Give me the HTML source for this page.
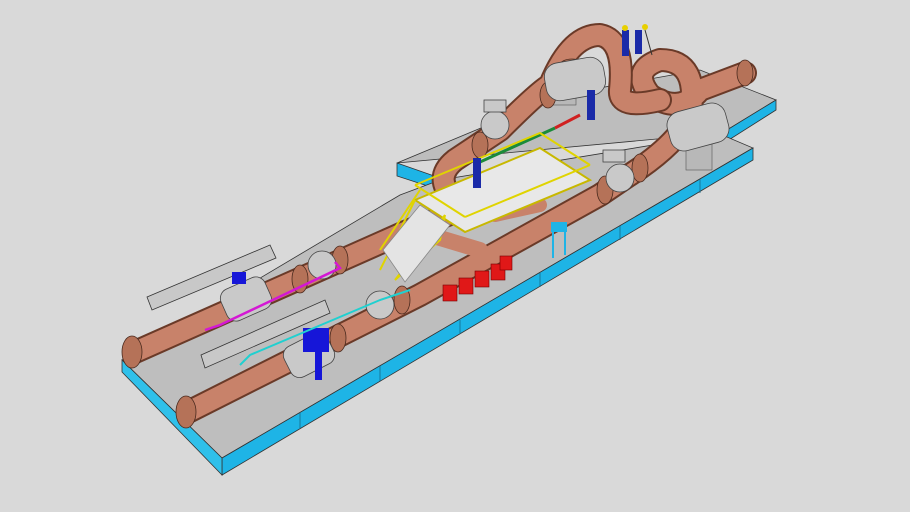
<!DOCTYPE html>
<html><head><meta charset="utf-8"><style>
html,body{margin:0;padding:0;background:#d9d9d9;width:910px;height:512px;overflow:hidden}
</style></head><body>
<svg width="910" height="512" viewBox="0 0 910 512" xmlns="http://www.w3.org/2000/svg">
<rect width="910" height="512" fill="#d9d9d9"/>
<!-- upper deck -->
<polygon points="397,163 560,95 700,70 776,100 722,133" fill="#bdbdbd" stroke="#333" stroke-width="0.8"/>
<polygon points="722,133 776,100 776,110 724,143" fill="#1eb4e6" stroke="#333" stroke-width="0.8"/>
<polygon points="397,163 440,178 440,190 397,176" fill="#1eb4e6" stroke="#333" stroke-width="0.8"/>
<!-- lower deck -->
<polygon points="122,360 400,195 440,180 720,134 753,148 222,458" fill="#bebebe" stroke="#333" stroke-width="0.8"/>
<polygon points="222,458 753,148 753,160 222,475" fill="#1eb4e6" stroke="#333" stroke-width="0.8"/>
<polygon points="122,360 222,458 222,475 122,372" fill="#2fc0ea" stroke="#333" stroke-width="0.8"/>
<g stroke="#146a8a" stroke-width="0.8">
<line x1="300" y1="413" x2="300" y2="428"/><line x1="380" y1="366" x2="380" y2="381"/><line x1="460" y1="320" x2="460" y2="334"/><line x1="540" y1="273" x2="540" y2="287"/><line x1="620" y1="226" x2="620" y2="240"/><line x1="700" y1="179" x2="700" y2="193"/>
</g>
<!-- gray beams -->
<polygon points="147,297 270,245 276,258 152,310" fill="#c8c8c8" stroke="#333" stroke-width="0.8"/>
<polygon points="201,355 325,300 330,313 205,368" fill="#c8c8c8" stroke="#333" stroke-width="0.8"/>
<!-- columns -->
<rect x="686" y="140" width="26" height="30" fill="#b8b8b8" stroke="#555" stroke-width="0.6"/>
<rect x="550" y="85" width="26" height="20" fill="#b8b8b8" stroke="#555" stroke-width="0.6"/>
<!-- pipes -->
<g fill="none" stroke-linecap="round" stroke-linejoin="round">
<path d="M135,352 L405,232 L460,210" stroke="#6a3a28" stroke-width="24"/>
<path d="M135,352 L405,232 L460,210" stroke="#c8826a" stroke-width="20"/>
<path d="M188,412 L420,295 L600,195 L640,168 Q680,140 690,115 Q700,60 660,60 Q630,70 650,95 Q680,115 700,90 L745,73" stroke="#6a3a28" stroke-width="24"/>
<path d="M188,412 L420,295 L600,195 L640,168 Q680,140 690,115 Q700,60 660,60 Q630,70 650,95 Q680,115 700,90 L745,73" stroke="#c8826a" stroke-width="20"/>
<path d="M460,205 Q430,180 455,160 L500,130 Q540,90 550,85 Q570,35 600,35 Q625,40 620,90 Q618,110 660,100" stroke="#6a3a28" stroke-width="24"/>
<path d="M460,205 Q430,180 455,160 L500,130 Q540,90 550,85 Q570,35 600,35 Q625,40 620,90 Q618,110 660,100" stroke="#c8826a" stroke-width="20"/>
<path d="M430,235 L480,250" stroke="#c8826a" stroke-width="16"/>
<path d="M495,215 L540,205" stroke="#c8826a" stroke-width="14"/>
</g>
<!-- flanges -->
<g fill="#b57258" stroke="#4a2a1e" stroke-width="0.8">
<ellipse cx="132" cy="352" rx="10" ry="16"/><ellipse cx="186" cy="412" rx="10" ry="16"/>
<ellipse cx="300" cy="279" rx="8" ry="14"/><ellipse cx="340" cy="260" rx="8" ry="14"/>
<ellipse cx="338" cy="338" rx="8" ry="14"/><ellipse cx="402" cy="300" rx="8" ry="14"/>
<ellipse cx="605" cy="190" rx="8" ry="14"/><ellipse cx="640" cy="168" rx="8" ry="14"/>
<ellipse cx="745" cy="73" rx="8" ry="13"/><ellipse cx="480" cy="145" rx="8" ry="13"/>
<ellipse cx="548" cy="95" rx="8" ry="13"/><ellipse cx="572" cy="65" rx="12" ry="6"/>
</g>
<!-- gray valves / vessels -->
<g fill="#c9c9c9" stroke="#444" stroke-width="0.8">
<rect x="222" y="282" width="48" height="34" rx="10" transform="rotate(-24 246 299)"/>
<rect x="285" y="338" width="48" height="34" rx="10" transform="rotate(-27 309 355)"/>
<circle cx="322" cy="265" r="14"/><circle cx="380" cy="305" r="14"/>
<circle cx="495" cy="125" r="14"/><circle cx="620" cy="178" r="14"/>
<rect x="545" y="60" width="60" height="38" rx="14" transform="rotate(-10 575 79)"/>
<rect x="668" y="107" width="60" height="40" rx="14" transform="rotate(-15 698 127)"/>
<rect x="484" y="100" width="22" height="12"/><rect x="603" y="150" width="22" height="12"/>
</g>
<!-- blue actuators -->
<rect x="303" y="328" width="26" height="24" fill="#1616d8"/><rect x="315" y="350" width="7" height="30" fill="#1616d8"/>
<rect x="232" y="272" width="14" height="12" fill="#1616d8"/>
<!-- small lines -->
<path d="M205,330 L220,325 L340,268 L335,262" stroke="#d418d4" stroke-width="2.5" fill="none"/>
<path d="M240,365 L250,355 L380,300 L410,290" stroke="#20d0d0" stroke-width="2" fill="none"/>
<path d="M480,162 L555,128" stroke="#1a8a3a" stroke-width="3"/>
<path d="M555,128 L580,115" stroke="#d02020" stroke-width="3"/>
<!-- yellow platform -->
<g stroke="#e0d400" stroke-width="2" fill="none">
<polygon points="415,200 540,148 590,180 465,232" fill="#e8e8e8" stroke="#c8b800"/>
<path d="M415,185 L540,133 L590,165 M465,217 L590,165 M415,185 L465,217"/>
<path d="M380,270 L415,200 M395,280 L445,215 M380,250 L420,190"/>
<path d="M395,280 L440,240 L445,215"/>
</g>
<polygon points="383,250 420,205 450,225 405,282" fill="#e4e4e4" stroke="#888" stroke-width="0.8"/>
<!-- red boxes -->
<g fill="#e01818" stroke="#700" stroke-width="0.6">
<rect x="443" y="285" width="14" height="16"/><rect x="459" y="278" width="14" height="16"/><rect x="475" y="271" width="14" height="16"/><rect x="491" y="264" width="14" height="16"/><rect x="500" y="256" width="12" height="14"/>
</g>
<rect x="551" y="222" width="16" height="10" fill="#1eb4e6"/>
<line x1="553" y1="232" x2="553" y2="258" stroke="#1eb4e6" stroke-width="2"/><line x1="565" y1="232" x2="565" y2="255" stroke="#1eb4e6" stroke-width="2"/>
<!-- people -->
<g fill="#1a2aa8">
<rect x="622" y="30" width="7" height="26"/><rect x="635" y="30" width="7" height="24"/>
<rect x="587" y="90" width="8" height="30"/><rect x="473" y="158" width="8" height="30"/>
</g>
<g fill="#e8d000"><circle cx="625" cy="28" r="3"/><circle cx="645" cy="27" r="3"/></g>
<line x1="645" y1="30" x2="652" y2="55" stroke="#333"/>
</svg>
</body></html>
